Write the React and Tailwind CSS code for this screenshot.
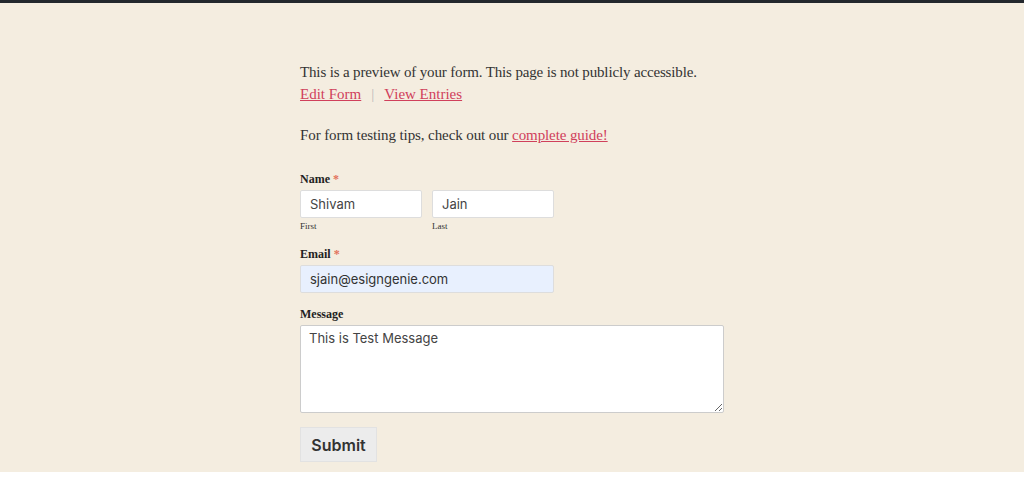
export default function App() {
  const serif = { fontFamily: '"Liberation Serif", "DejaVu Serif", serif' };
  const sans = { fontFamily: 'Inter, "Liberation Sans", Arial, sans-serif' };

  return (
    <div className="w-[1024px] h-[497px] bg-white">
      <div className="h-[3px] bg-[#23282d]" />
      <div className="h-[469px] bg-[#f4ede0]">
        <div className="w-[424px] ml-[300px] pt-[58px] text-[#333]" style={serif}>
          <p className="text-[15px] leading-[22px] tracking-[-0.15px]">
            This is a preview of your form. This page is not publicly accessible.
          </p>
          <p className="text-[15px] leading-[22px]">
            <a href="#" className="text-[#d0405b] underline">Edit Form</a>
            <span className="text-[#bbb] mx-[10px]">|</span>
            <a href="#" className="text-[#d0405b] underline">View Entries</a>
          </p>
          <p className="text-[15px] leading-[22px] mt-[19px] tracking-[-0.1px]">
            For form testing tips, check out our{" "}
            <a href="#" className="text-[#d0405b] underline">complete guide!</a>
          </p>

          <form className="mt-[26px]">
            <div className="text-[12px] font-bold leading-[14px] text-[#222]">
              Name <span className="text-[#e2715a]">*</span>
            </div>
            <div className="flex gap-[10px] mt-[4px]">
              <div className="w-[122px]">
                <input
                  defaultValue="Shivam"
                  className="w-full h-[28px] px-[9px] bg-white border border-[#ddd] rounded-[2px] text-[13px] text-[#444] outline-none"
                  style={sans}
                />
                <div className="text-[9px] leading-[12px] mt-[2px] text-[#333]">First</div>
              </div>
              <div className="w-[122px]">
                <input
                  defaultValue="Jain"
                  className="w-full h-[28px] px-[9px] bg-white border border-[#ddd] rounded-[2px] text-[13px] text-[#444] outline-none"
                  style={sans}
                />
                <div className="text-[9px] leading-[12px] mt-[2px] text-[#333]">Last</div>
              </div>
            </div>

            <div className="text-[12px] font-bold leading-[14px] text-[#222] mt-[15px]">
              Email <span className="text-[#e2715a]">*</span>
            </div>
            <input
              defaultValue="sjain@esigngenie.com"
              className="block w-[254px] h-[28px] mt-[4px] px-[9px] bg-[#e8f0fe] border border-[#ddd] rounded-[2px] text-[13px] text-[#333] outline-none"
              style={sans}
            />

            <div className="text-[12px] font-bold leading-[14px] text-[#222] mt-[14px]">Message</div>
            <textarea
              defaultValue="This is Test Message"
              className="block w-[424px] h-[88px] mt-[4px] px-[8px] py-[3px] bg-white border border-[#ccc] rounded-[2px] text-[13px] text-[#444] outline-none"
              style={sans}
            />

            <button
              type="button"
              className="mt-[14px] w-[77px] h-[35px] bg-[#ececec] border border-[#e2e2e2] text-[16px] font-semibold text-[#333]"
              style={sans}
            >
              Submit
            </button>
          </form>
        </div>
      </div>
    </div>
  );
}
